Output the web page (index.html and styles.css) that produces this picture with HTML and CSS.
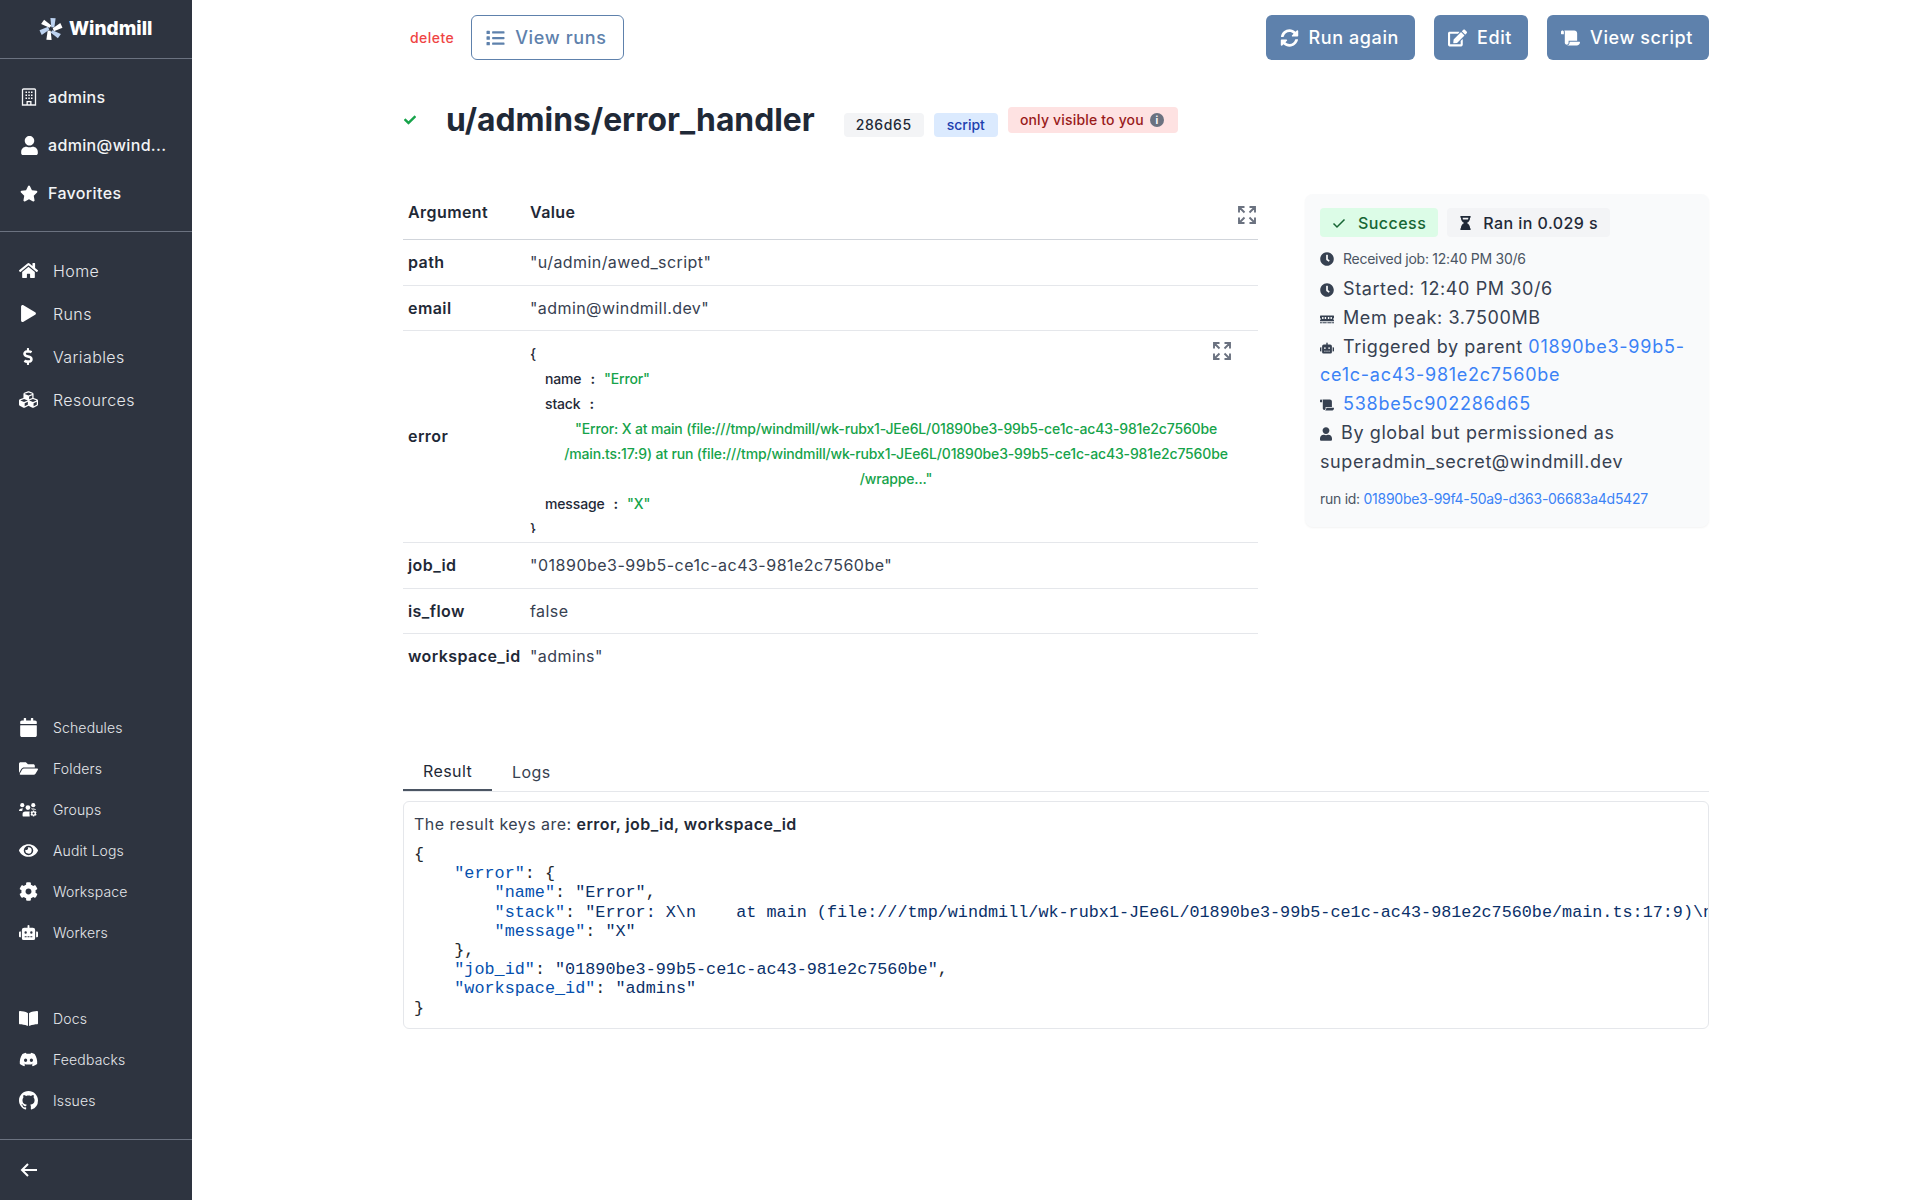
FILE: index.html
```html
<!DOCTYPE html>
<html lang="en">
<head>
<meta charset="utf-8">
<title>u/admins/error_handler | Windmill</title>
<link rel="stylesheet" href="styles.css">
</head>
<body>
<svg class="sprite" aria-hidden="true">
  <symbol id="i-user" viewBox="0 0 448 512"><path d="M224 256c70.7 0 128-57.3 128-128S294.7 0 224 0 96 57.3 96 128s57.3 128 128 128zm89.6 32h-16.7c-22.2 10.2-46.9 16-72.9 16s-50.6-5.8-72.9-16h-16.7C60.2 288 0 348.2 0 422.4V464c0 26.5 21.5 48 48 48h352c26.5 0 48-21.5 48-48v-41.6c0-74.2-60.2-134.4-134.4-134.4z"/></symbol>
  <symbol id="i-star" viewBox="0 0 576 512"><path d="M259.3 17.8L194 150.2 47.9 171.5c-26.2 3.8-36.7 36.1-17.7 54.6l105.7 103-25 145.5c-4.5 26.3 23.2 46 46.4 33.7L288 439.6l130.7 68.7c23.2 12.2 50.9-7.4 46.4-33.7l-25-145.5 105.7-103c19-18.5 8.5-50.8-17.7-54.6L382 150.2 316.7 17.8c-11.7-23.6-45.6-23.9-57.4 0z"/></symbol>
  <symbol id="i-home" viewBox="0 0 576 512"><path d="M280.37 148.26L96 300.11V464a16 16 0 0 0 16 16l112.06-.29a16 16 0 0 0 15.92-16V368a16 16 0 0 1 16-16h64a16 16 0 0 1 16 16v95.64a16 16 0 0 0 16 16.05L464 480a16 16 0 0 0 16-16V300L295.67 148.26a12.19 12.19 0 0 0-15.3 0zM571.6 251.47L488 182.56V44.05a12 12 0 0 0-12-12h-56a12 12 0 0 0-12 12v72.61L318.47 43a48 48 0 0 0-61 0L4.34 251.47a12 12 0 0 0-1.6 16.9l25.5 31A12 12 0 0 0 45.15 301l235.22-193.74a12.19 12.19 0 0 1 15.3 0L530.9 301a12 12 0 0 0 16.9-1.6l25.5-31a12 12 0 0 0-1.7-16.93z"/></symbol>
  <symbol id="i-play" viewBox="0 0 448 512"><path d="M424.4 214.7L72.4 6.6C43.8-10.3 0 6.1 0 47.9V464c0 37.5 40.7 60.1 72.4 41.3l352-208c31.4-18.5 31.5-64.1 0-82.6z"/></symbol>
  <symbol id="i-dollar" viewBox="0 0 320 512"><path d="M209.2 233.4l-108-31.6C88.7 198.2 80 186.5 80 173.5c0-16.3 13.2-29.5 29.5-29.5h66.3c12.2 0 24.2 3.7 34.2 10.5 6.1 4.1 14.3 3.1 19.5-2l34.8-34c7.1-6.9 6.1-18.4-1.8-24.5C238 74.8 207.4 64.1 176 64V16c0-8.8-7.2-16-16-16h-32c-8.8 0-16 7.2-16 16v48h-2.5C45.8 64-5.4 118.7.5 183.6c4.2 46.1 39.4 83.6 83.8 96.6l102.5 30c12.5 3.7 21.2 15.3 21.2 28.3 0 16.3-13.2 29.5-29.5 29.5h-66.3C100 368 88 364.3 78 357.5c-6.1-4.1-14.3-3.1-19.5 2l-34.8 34c-7.1 6.9-6.1 18.4 1.8 24.5 24.5 19.2 55.1 29.9 86.5 30v48c0 8.8 7.2 16 16 16h32c8.8 0 16-7.2 16-16v-48.2c46.6-.9 90.3-28.6 105.7-72.7 21.5-61.6-14.6-124.8-72.5-141.7z"/></symbol>
  <symbol id="i-cubes" viewBox="0 0 512 512"><path d="M488.6 250.2L392 214V105.5c0-15-9.3-28.4-23.4-33.7l-100-37.5c-8.1-3.1-17.1-3.1-25.3 0l-100 37.5c-14.1 5.3-23.4 18.7-23.4 33.7V214l-96.6 36.2C9.3 255.5 0 268.9 0 283.9V394c0 13.6 7.7 26.1 19.9 32.2l100 50c10.1 5.1 22.1 5.1 32.2 0l103.9-52 103.9 52c10.1 5.1 22.1 5.1 32.2 0l100-50c12.2-6.1 19.9-18.6 19.9-32.2V283.9c0-15-9.3-28.4-23.4-33.7zM358 214.8l-85 31.9v-68.2l85-37v73.3zM154 104.1l102-38.2 102 38.2v.6l-102 41.4-102-41.4v-.6zm84 291.1l-85 42.5v-79.1l85-38.8v75.4zm0-112l-102 41.4-102-41.4v-.6l102-38.2 102 38.2v.6zm240 112l-85 42.5v-79.1l85-38.8v75.4zm0-112l-102 41.4-102-41.4v-.6l102-38.2 102 38.2v.6z"/></symbol>
  <symbol id="i-calendar" viewBox="0 0 448 512"><path d="M12 192h424c6.6 0 12 5.4 12 12v260c0 26.5-21.5 48-48 48H48c-26.5 0-48-21.5-48-48V204c0-6.6 5.4-12 12-12zm436-44v-36c0-26.5-21.5-48-48-48h-48V12c0-6.6-5.4-12-12-12h-40c-6.6 0-12 5.4-12 12v52H160V12c0-6.6-5.4-12-12-12h-40c-6.6 0-12 5.4-12 12v52H48C21.5 64 0 85.5 0 112v36c0 6.6 5.4 12 12 12h424c6.6 0 12-5.4 12-12z"/></symbol>
  <symbol id="i-folder" viewBox="0 0 576 512"><path d="M572.694 292.093L500.27 416.248A63.997 63.997 0 0 1 444.989 448H45.025c-18.523 0-30.064-20.093-20.731-36.093l72.424-124.155A64 64 0 0 1 152 256h399.964c18.523 0 30.064 20.093 20.73 36.093zM152 224h328v-48c0-26.51-21.49-48-48-48H272l-64-64H48C21.49 64 0 85.49 0 112v278.046l69.077-118.418C86.214 242.25 117.989 224 152 224z"/></symbol>
  <symbol id="i-eye" viewBox="0 0 576 512"><path d="M572.52 241.4C518.29 135.59 410.93 64 288 64S57.68 135.64 3.48 241.41a32.35 32.35 0 0 0 0 29.19C57.71 376.41 165.07 448 288 448s230.32-71.64 284.52-177.41a32.35 32.35 0 0 0 0-29.19zM288 400a144 144 0 1 1 144-144 143.93 143.93 0 0 1-144 144zm0-240a95.31 95.31 0 0 0-25.31 3.79 47.85 47.85 0 0 1-66.9 66.9A95.78 95.78 0 1 0 288 160z"/></symbol>
  <symbol id="i-cog" viewBox="0 0 512 512"><path d="M487.4 315.7l-42.6-24.6c4.3-23.2 4.3-47 0-70.2l42.6-24.6c4.9-2.8 7.1-8.6 5.5-14-11.1-35.6-30-67.8-54.7-94.6-3.8-4.1-10-5.1-14.8-2.3L380.8 110c-17.9-15.4-38.5-27.3-60.8-35.1V25.8c0-5.6-3.9-10.5-9.4-11.7-36.7-8.2-74.3-7.8-109.2 0-5.5 1.2-9.4 6.1-9.4 11.7V75c-22.2 7.9-42.8 19.8-60.8 35.1L88.7 85.5c-4.9-2.8-11-1.9-14.8 2.3-24.7 26.7-43.6 58.9-54.7 94.6-1.7 5.4.6 11.2 5.5 14L67.3 221c-4.3 23.2-4.3 47 0 70.2l-42.6 24.6c-4.9 2.8-7.1 8.6-5.5 14 11.1 35.6 30 67.8 54.7 94.6 3.8 4.1 10 5.1 14.8 2.3l42.6-24.6c17.9 15.4 38.5 27.3 60.8 35.1v49.2c0 5.6 3.9 10.5 9.4 11.7 36.7 8.2 74.3 7.8 109.2 0 5.5-1.2 9.4-6.1 9.4-11.7v-49.2c22.2-7.9 42.8-19.8 60.8-35.1l42.6 24.6c4.9 2.8 11 1.9 14.8-2.3 24.7-26.7 43.6-58.9 54.7-94.6 1.5-5.5-.7-11.3-5.6-14.1zM256 336c-44.1 0-80-35.9-80-80s35.9-80 80-80 80 35.9 80 80-35.9 80-80 80z"/></symbol>
  <symbol id="i-robot" viewBox="0 0 640 512"><path d="M32,224H64V416H32A31.96166,31.96166,0,0,1,0,384V256A31.96166,31.96166,0,0,1,32,224Zm512-48V448a64.06328,64.06328,0,0,1-64,64H160a64.06328,64.06328,0,0,1-64-64V176a79.974,79.974,0,0,1,80-80H288V32a32,32,0,0,1,64,0V96H464A79.974,79.974,0,0,1,544,176ZM264,256a40,40,0,1,0-40,40A39.997,39.997,0,0,0,264,256Zm-8,128H192v32h64Zm96,0H288v32h64ZM456,256a40,40,0,1,0-40,40A39.997,39.997,0,0,0,456,256Zm-8,128H384v32h64ZM640,256V384a31.96166,31.96166,0,0,1-32,32H576V224h32A31.96166,31.96166,0,0,1,640,256Z"/></symbol>
  <symbol id="i-book" viewBox="0 0 576 512"><path d="M542.22 32.05c-54.8 3.11-163.72 14.43-230.96 55.59-4.64 2.84-7.27 7.89-7.27 13.17v363.87c0 11.55 12.63 18.85 23.28 13.49 69.18-34.82 169.23-44.32 218.7-46.92 16.89-.89 30.02-14.43 30.02-30.66V62.75c.01-17.71-15.35-31.74-33.77-30.7zM264.73 87.64C197.5 46.48 88.58 35.17 33.78 32.05 15.36 31.01 0 45.04 0 62.75V400.6c0 16.24 13.13 29.78 30.02 30.66 49.49 2.6 149.59 12.11 218.77 46.95 10.62 5.35 23.21-1.94 23.21-13.46V100.63c0-5.29-2.62-10.14-7.27-12.99z"/></symbol>
  <symbol id="i-discord" viewBox="0 0 640 512"><path d="M524.531,69.836a1.5,1.5,0,0,0-.764-.7A485.065,485.065,0,0,0,404.081,32.03a1.816,1.816,0,0,0-1.923.91,337.461,337.461,0,0,0-14.9,30.6,447.848,447.848,0,0,0-134.426,0,309.541,309.541,0,0,0-15.135-30.6,1.89,1.89,0,0,0-1.924-.91A483.689,483.689,0,0,0,116.085,69.137a1.712,1.712,0,0,0-.788.676C39.068,183.651,18.186,294.69,28.43,404.354a2.016,2.016,0,0,0,.765,1.375A487.666,487.666,0,0,0,176.02,479.918a1.9,1.9,0,0,0,2.063-.676A348.2,348.2,0,0,0,208.12,430.4a1.86,1.86,0,0,0-1.019-2.588,321.173,321.173,0,0,1-45.868-21.853,1.885,1.885,0,0,1-.185-3.126c3.082-2.309,6.166-4.711,9.109-7.137a1.819,1.819,0,0,1,1.9-.256c96.229,43.917,200.41,43.917,295.5,0a1.812,1.812,0,0,1,1.924.233c2.944,2.426,6.027,4.851,9.132,7.16a1.884,1.884,0,0,1-.162,3.126,301.407,301.407,0,0,1-45.89,21.83,1.875,1.875,0,0,0-1,2.611,391.055,391.055,0,0,0,30.014,48.815,1.864,1.864,0,0,0,2.063.7A486.048,486.048,0,0,0,610.7,405.729a1.882,1.882,0,0,0,.765-1.352C623.729,277.594,590.933,167.465,524.531,69.836ZM222.491,337.58c-28.972,0-52.844-26.587-52.844-59.239S193.056,219.1,222.491,219.1c29.665,0,53.306,26.82,52.843,59.239C275.334,310.993,251.924,337.58,222.491,337.58Zm195.38,0c-28.971,0-52.843-26.587-52.843-59.239S388.437,219.1,417.871,219.1c29.667,0,53.307,26.82,52.844,59.239C470.715,310.993,447.538,337.58,417.871,337.58Z"/></symbol>
  <symbol id="i-github" viewBox="0 0 16 16"><path d="M8 0C3.58 0 0 3.58 0 8c0 3.54 2.29 6.53 5.47 7.59.4.07.55-.17.55-.38 0-.19-.01-.82-.01-1.49-2.01.37-2.53-.49-2.69-.94-.09-.23-.48-.94-.82-1.13-.28-.15-.68-.52-.01-.53.63-.01 1.08.58 1.23.82.72 1.21 1.87.87 2.33.66.07-.52.28-.87.51-1.07-1.78-.2-3.64-.89-3.64-3.95 0-.87.31-1.59.82-2.15-.08-.2-.36-1.02.08-2.12 0 0 .67-.21 2.2.82.64-.18 1.32-.27 2-.27.68 0 1.36.09 2 .27 1.53-1.04 2.2-.82 2.2-.82.44 1.1.16 1.92.08 2.12.51.56.82 1.27.82 2.15 0 3.07-1.87 3.75-3.65 3.95.29.25.54.73.54 1.48 0 1.07-.01 1.93-.01 2.2 0 .21.15.46.55.38A8.013 8.013 0 0016 8c0-4.42-3.58-8-8-8z"/></symbol>
  <symbol id="i-clock" viewBox="0 0 512 512"><path d="M256,8C119,8,8,119,8,256S119,504,256,504,504,393,504,256,393,8,256,8Zm92.49,313h0l-20,25a16,16,0,0,1-22.49,2.5h0l-67-49.72a40,40,0,0,1-15-31.23V112a16,16,0,0,1,16-16h32a16,16,0,0,1,16,16V256l58,42.5A16,16,0,0,1,348.49,321Z"/></symbol>
  <symbol id="i-scroll" viewBox="0 0 640 512"><path d="M48 0C21.53 0 0 21.53 0 48v64c0 8.84 7.16 16 16 16h80V48C96 21.53 74.47 0 48 0zm208 412.57V352h288V96c0-52.94-43.06-96-96-96H111.59C121.74 13.41 128 29.92 128 48v368c0 38.87 34.65 69.65 74.75 63.12C234.22 474 256 444.46 256 412.57zM288 384v32c0 52.93-43.06 96-96 96h336c61.86 0 112-50.14 112-112 0-8.84-7.16-16-16-16H288z"/></symbol>
  <symbol id="i-list" viewBox="0 0 512 512"><path d="M80 368H16a16 16 0 0 0-16 16v64a16 16 0 0 0 16 16h64a16 16 0 0 0 16-16v-64a16 16 0 0 0-16-16zm0-320H16A16 16 0 0 0 0 64v64a16 16 0 0 0 16 16h64a16 16 0 0 0 16-16V64a16 16 0 0 0-16-16zm0 160H16a16 16 0 0 0-16 16v64a16 16 0 0 0 16 16h64a16 16 0 0 0 16-16v-64a16 16 0 0 0-16-16zm416 176H176a16 16 0 0 0-16 16v32a16 16 0 0 0 16 16h320a16 16 0 0 0 16-16v-32a16 16 0 0 0-16-16zm0-320H176a16 16 0 0 0-16 16v32a16 16 0 0 0 16 16h320a16 16 0 0 0 16-16V80a16 16 0 0 0-16-16zm0 160H176a16 16 0 0 0-16 16v32a16 16 0 0 0 16 16h320a16 16 0 0 0 16-16v-32a16 16 0 0 0-16-16z"/></symbol>
  <symbol id="i-sync" viewBox="0 0 512 512"><path d="M370.72 133.28C339.458 104.008 298.888 87.962 255.848 88c-77.458.068-144.328 53.178-162.791 126.85-1.344 5.363-6.122 9.15-11.651 9.15H24.103c-7.498 0-13.194-6.807-11.807-14.176C33.933 94.924 134.813 8 256 8c66.448 0 126.791 26.136 171.315 68.685L463.03 40.97C478.149 25.851 504 36.559 504 57.941V192c0 13.255-10.745 24-24 24H345.941c-21.382 0-32.09-25.851-16.971-40.971l41.75-41.749zM32 296h134.059c21.382 0 32.09 25.851 16.971 40.971l-41.75 41.75c31.262 29.273 71.835 45.319 114.876 45.28 77.418-.07 144.315-53.144 162.787-126.849 1.344-5.363 6.122-9.15 11.651-9.15h57.304c7.498 0 13.194 6.807 11.807 14.176C478.067 417.076 377.187 504 256 504c-66.448 0-126.791-26.136-171.315-68.685L48.97 471.03C33.851 486.149 8 475.441 8 454.059V320c0-13.255 10.745-24 24-24z"/></symbol>
  <symbol id="i-edit" viewBox="0 0 576 512"><path d="M402.6 83.2l90.2 90.2c3.8 3.8 3.8 10 0 13.8L274.4 405.6l-92.8 10.3c-12.4 1.4-22.9-9.1-21.5-21.5l10.3-92.8L388.8 83.2c3.8-3.8 10-3.8 13.8 0zm162-22.9l-48.8-48.8c-15.2-15.2-39.9-15.2-55.2 0l-35.4 35.4c-3.8 3.8-3.8 10 0 13.8l90.2 90.2c3.8 3.8 10 3.8 13.8 0l35.4-35.4c15.2-15.3 15.2-40 0-55.2zM384 346.2V448H64V128h229.8c3.2 0 6.2-1.3 8.5-3.5l40-40c7.6-7.6 2.2-20.5-8.5-20.5H48C21.5 64 0 85.5 0 112v352c0 26.5 21.5 48 48 48h352c26.5 0 48-21.5 48-48V306.2c0-10.7-12.9-16-20.5-8.5l-40 40c-2.2 2.3-3.5 5.3-3.5 8.5z"/></symbol>
  <symbol id="i-check" viewBox="0 0 512 512"><path d="M173.898 439.404l-166.4-166.4c-9.997-9.997-9.997-26.206 0-36.204l36.203-36.204c9.997-9.998 26.207-9.998 36.204 0L192 312.69 432.095 72.596c9.997-9.997 26.207-9.997 36.204 0l36.203 36.204c9.997 9.997 9.997 26.206 0 36.204l-294.4 294.401c-9.998 9.997-26.207 9.997-36.204-.001z"/></symbol>
  <symbol id="i-tick" viewBox="0 0 14 14"><path d="M1.500 7.500 5 11l7.500-7.500" fill="none" stroke="currentColor" stroke-width="1.500"/></symbol>
  <symbol id="i-hourglass" viewBox="0 0 384 512"><path fill-rule="evenodd" d="M360 0H24C10.700 0 0 10.700 0 24v16c0 13.300 10.700 24 24 24 0 91 51 167.700 120.800 192C75 280.300 24 357 24 448c-13.300 0-24 10.700-24 24v16c0 13.300 10.700 24 24 24h336c13.300 0 24-10.700 24-24v-16c0-13.300-10.700-24-24-24 0-91-51-167.700-120.800-192C309 231.700 360 155 360 64c13.300 0 24-10.700 24-24V24c0-13.300-10.700-24-24-24zM296 64c0 22-4 42-11 60H99c-7-18-11-38-11-60z"/></symbol>
  <symbol id="i-expand" viewBox="0 0 20 20"><path d="M2 7.500V2h5.500M2 2l5.500 5.500M12.500 2H18v5.500M18 2l-5.500 5.500M2 12.500V18h5.500M2 18l5.500-5.500M12.500 18H18v-5.500M18 18l-5.500-5.500" fill="none" stroke="currentColor" stroke-width="1.900"/></symbol>
  <symbol id="i-memory" viewBox="0 0 640 512"><path fill-rule="evenodd" d="M20 96h600a20 20 0 0 1 20 20v84c-20 4-32 24-32 56s12 52 32 56v52H0v-52c20-4 32-24 32-56s-12-52-32-56v-84a20 20 0 0 1 20-20zM96 160v96h64v-96zM216 160v96h64v-96zM360 160v96h64v-96zM480 160v96h64v-96z"/><path d="M0 400h88v48H0zM112 400h192v48H112zM336 400h192v48H336zM552 400h88v48h-88z"/></symbol>
  <symbol id="i-building" viewBox="0 0 16 18"><path fill="none" stroke="currentColor" stroke-width="1.300" d="M2.500 1h11a1 1 0 0 1 1 1v15h-13V2a1 1 0 0 1 1-1z"/><path d="M4.500 3.500h1.500V5H4.500zM7.300 3.500h1.500V5H7.300zM10 3.500h1.500V5H10zM4.500 6.500h1.500V8H4.500zM7.300 6.500h1.500V8H7.300zM10 6.500h1.500V8H10zM4.500 9.500h1.500V11H4.500zM7.300 9.500h1.500V11H7.300zM10 9.500h1.500V11H10zM5.500 13h5v4h-1.300v-2.700H6.800V17H5.500z"/></symbol>
  <symbol id="i-blade" viewBox="0 0 24 24"><path d="M11.500 10.200 6.800 2.200 11.700.4 14.400 9.300z"/></symbol>
  <symbol id="i-users-cog" viewBox="0 0 640 512">
    <circle cx="110" cy="110" r="70"/><circle cx="480" cy="110" r="70"/><circle cx="300" cy="190" r="80"/>
    <path d="M0 310a90 90 0 0 1 90-90h50a100 100 0 0 0-30 90H10z"/>
    <path d="M400 220h90a90 90 0 0 1 90 80h-100z"/>
    <path d="M120 470v-60a90 90 0 0 1 90-90h150v170H140a20 20 0 0 1-20-20z"/>
    <circle cx="490" cy="390" r="130" fill="#2e3440"/>
    <use href="#i-cog" x="380" y="280" width="220" height="220"/>
  </symbol>
</svg>

<div class="app">
  <aside class="sidebar">
    <div class="brand">
      <svg class="logo" viewBox="0 0 24 24" aria-hidden="true">
        <use href="#i-blade" class="blade-w" transform="rotate(-35 12 12)"/>
        <use href="#i-blade" class="blade-b" transform="rotate(25 12 12)"/>
        <use href="#i-blade" class="blade-w" transform="rotate(85 12 12)"/>
        <use href="#i-blade" class="blade-b" transform="rotate(145 12 12)"/>
        <use href="#i-blade" class="blade-w" transform="rotate(205 12 12)"/>
        <use href="#i-blade" class="blade-b" transform="rotate(265 12 12)"/>
      </svg>
      <span>Windmill</span>
    </div>
    <div class="user-menu">
      <a class="user-item"><span class="ubox"><svg class="uic-b"><use href="#i-building"/></svg></span>admins</a>
      <a class="user-item"><span class="ubox"><svg class="uic-t"><use href="#i-user"/></svg></span>admin@wind...</a>
      <a class="user-item"><span class="ubox"><svg class="uic"><use href="#i-star"/></svg></span>Favorites</a>
    </div>
    <nav class="nav-main">
      <a class="nav-item"><svg class="nic"><use href="#i-home"/></svg>Home</a>
      <a class="nav-item"><svg class="nic"><use href="#i-play"/></svg>Runs</a>
      <a class="nav-item"><svg class="nic"><use href="#i-dollar"/></svg>Variables</a>
      <a class="nav-item"><svg class="nic nic-t"><use href="#i-cubes"/></svg>Resources</a>
    </nav>
    <nav class="nav-sec">
      <a class="sec-item"><svg class="nic nic-t"><use href="#i-calendar"/></svg>Schedules</a>
      <a class="sec-item"><svg class="nic"><use href="#i-folder"/></svg>Folders</a>
      <a class="sec-item"><svg class="nic"><use href="#i-users-cog"/></svg>Groups</a>
      <a class="sec-item"><svg class="nic"><use href="#i-eye"/></svg>Audit Logs</a>
      <a class="sec-item"><svg class="nic nic-t"><use href="#i-cog"/></svg>Workspace</a>
      <a class="sec-item"><svg class="nic"><use href="#i-robot"/></svg>Workers</a>
    </nav>
    <nav class="nav-help">
      <a class="sec-item"><svg class="nic"><use href="#i-book"/></svg>Docs</a>
      <a class="sec-item"><svg class="nic"><use href="#i-discord"/></svg>Feedbacks</a>
      <a class="sec-item"><svg class="nic nic-t"><use href="#i-github"/></svg>Issues</a>
    </nav>
    <div class="collapse">
      <svg class="arrow" viewBox="0 0 18 16" aria-hidden="true"><path d="M8 2 2 8l6 6M2 8h15"/></svg>
    </div>
  </aside>

  <main class="main">
    <div class="container">
      <header class="actions">
        <div class="actions-left">
          <a class="delete">delete</a>
          <a class="btn btn-outline"><svg class="bic"><use href="#i-list"/></svg>View runs</a>
        </div>
        <div class="actions-right">
          <a class="btn btn-solid"><svg class="bic"><use href="#i-sync"/></svg>Run again</a>
          <a class="btn btn-solid"><svg class="bic"><use href="#i-edit"/></svg>Edit</a>
          <a class="btn btn-solid"><svg class="bic"><use href="#i-scroll"/></svg>View script</a>
        </div>
      </header>

      <div class="title-row">
        <svg class="status-check"><use href="#i-check"/></svg>
        <h1 class="title">u/admins/error_handler</h1>
        <span class="badge badge-gray">286d65</span>
        <span class="badge badge-blue">script</span>
        <span class="badge badge-red">only visible to you
          <span class="info">i</span>
        </span>
      </div>

      <div class="details">
        <div class="args">
          <svg class="expand expand-top"><use href="#i-expand"/></svg>
          <table class="args-table">
            <thead>
              <tr class="row-head"><th class="col-k">Argument</th><th>Value</th></tr>
            </thead>
            <tbody>
              <tr class="row"><td class="key">path</td><td>"u/admin/awed_script"</td></tr>
              <tr class="row row-s"><td class="key">email</td><td>"admin@windmill.dev"</td></tr>
              <tr class="row-tall"><td class="key">error</td>
                <td>
                  <div class="tree">
                    <svg class="expand expand-inner"><use href="#i-expand"/></svg>
                    <div class="tl">{</div>
                    <div class="tl ti"><b>name</b><i class="colon">:</i><span class="str">"Error"</span></div>
                    <div class="tl ti"><b>stack</b><i class="colon">:</i></div>
                    <div class="tstr">"Error: X at main (file:///tmp/windmill/wk-rubx1-JEe6L/01890be3-99b5-ce1c-ac43-981e2c7560be<br>/main.ts:17:9) at run (file:///tmp/windmill/wk-rubx1-JEe6L/01890be3-99b5-ce1c-ac43-981e2c7560be<br>/wrappe..."</div>
                    <div class="tl ti"><b>message</b><i class="colon">:</i><span class="str">"X"</span></div>
                    <div class="tl">}</div>
                  </div>
                </td></tr>
              <tr class="row"><td class="key">job_id</td><td class="val-id">"01890be3-99b5-ce1c-ac43-981e2c7560be"</td></tr>
              <tr class="row row-s"><td class="key">is_flow</td><td>false</td></tr>
              <tr class="row row-s row-last"><td class="key">workspace_id</td><td>"admins"</td></tr>
            </tbody>
          </table>
        </div>

        <aside class="panel">
          <div class="pills">
            <span class="pill pill-ok"><svg class="pic"><use href="#i-tick"/></svg>Success</span>
            <span class="pill pill-time"><svg class="pic-h"><use href="#i-hourglass"/></svg>Ran in 0.029 s</span>
          </div>
          <div class="received"><svg class="mic"><use href="#i-clock"/></svg>Received job: 12:40 PM 30/6</div>
          <div class="meta">
            <div><svg class="mic"><use href="#i-clock"/></svg>Started: 12:40 PM 30/6</div>
            <div><svg class="mic"><use href="#i-memory"/></svg>Mem peak: 3.7500MB</div>
            <div><svg class="mic"><use href="#i-robot"/></svg>Triggered by parent <a class="link">01890be3-99b5-ce1c-ac43-981e2c7560be</a></div>
            <div><svg class="mic"><use href="#i-scroll"/></svg><a class="link">538be5c902286d65</a></div>
            <div><svg class="mic mic-u"><use href="#i-user"/></svg>By global but permissioned as superadmin_secret@windmill.dev</div>
          </div>
          <div class="runid">run id: <a class="link-s">01890be3-99f4-50a9-d363-06683a4d5427</a></div>
        </aside>
      </div>

      <div class="tabs">
        <a class="tab tab-on">Result</a>
        <a class="tab">Logs</a>
      </div>

      <section class="result">
        <p class="result-keys">The result keys are: <strong>error, job_id, workspace_id</strong></p>
<pre class="json">{
    <span class="k">"error"</span>: {
        <span class="k">"name"</span>: <span class="s">"Error"</span>,
        <span class="k">"stack"</span>: <span class="s">"Error: X\n    at main (file:///tmp/windmill/wk-rubx1-JEe6L/01890be3-99b5-ce1c-ac43-981e2c7560be/main.ts:17:9)\n    at run (file:///tmp/windmill/wk-rubx1-JEe6L/01890be3-99b5-ce1c-ac43-981e2c7560be/wrapper.ts:4:18)"</span>,
        <span class="k">"message"</span>: <span class="s">"X"</span>
    },
    <span class="k">"job_id"</span>: <span class="s">"01890be3-99b5-ce1c-ac43-981e2c7560be"</span>,
    <span class="k">"workspace_id"</span>: <span class="s">"admins"</span>
}</pre>
      </section>
    </div>
  </main>
</div>
</body>
</html>
```

FILE: styles.css
```css
* { box-sizing: border-box; }
html, body { margin: 0; padding: 0; height: 100%; }
body { font-family: Inter, "Liberation Sans", sans-serif; color: #1f2937; background: #fff; font-size: 16px; overflow: hidden; }
.sprite { display: none; }
.app { display: flex; height: 1200px; }

/* sidebar */
.sidebar { width: 192px; flex: none; background: #2e3440; color: #fff; display: flex; flex-direction: column; }
.brand { height: 59px; flex: none; border-bottom: 1px solid #6b7280; display: flex; align-items: center; padding-left: 39px; gap: 6px; font-size: 19px; font-weight: 800; padding-bottom: 1px; }
.logo { width: 24px; height: 24px; }
.blade-w { fill: #fff; }
.blade-b { fill: #bcd2f0; }
.user-menu { flex: none; padding: 14px 0; border-bottom: 1px solid #6b7280; height: 173px; }
.user-item { display: flex; align-items: center; height: 48px; font-size: 16px; font-weight: 500; color: #f3f4f6; letter-spacing: .35px; }
.ubox { width: 48px; flex: none; display: flex; justify-content: center; padding-left: 10px; }
.uic { width: 18px; height: 17px; }
.uic-t { width: 17px; height: 19px; }
.uic-b { width: 16px; height: 18px; }
.nav-main { flex: 1; padding-top: 17px; }
.nav-item { display: flex; align-items: center; height: 43px; padding-left: 19px; font-size: 16px; font-weight: 300; color: #e5e7eb; letter-spacing: .4px; }
.nav-sec { flex: none; }
.nav-help { flex: none; margin-top: 45px; margin-bottom: 18px; }
.sec-item { display: flex; align-items: center; height: 41px; padding-left: 19px; font-size: 14px; font-weight: 300; color: #e5e7eb; letter-spacing: .15px; }
.nic { width: 19px; height: 17px; margin-right: 15px; flex: none; fill: #fff; }
.nic-t { height: 19px; }
.collapse { height: 61px; flex: none; border-top: 1px solid #6b7280; display: flex; align-items: center; padding-left: 20px; }
.arrow { width: 18px; height: 16px; fill: none; stroke: #fff; stroke-width: 2; }
.sidebar svg { fill: #fff; }
.sidebar .arrow { fill: none; }

/* main */
.main { flex: 1; min-width: 0; padding-top: 15px; }
.container { width: 1306px; margin: 0 auto; }
.actions { display: flex; justify-content: space-between; align-items: center; height: 45px; }
.actions-left { display: flex; align-items: center; gap: 17px; padding-left: 7px; }
.actions-right { display: flex; gap: 19px; }
.delete { color: #ef4444; font-size: 14px; font-weight: 500; letter-spacing: .45px; }
.btn { display: flex; align-items: center; height: 45px; border-radius: 6px; font-size: 18px; font-weight: 500; padding: 0 16px 0 14px; gap: 10px; letter-spacing: .6px; }
.btn-solid { background: #5e81ac; color: #fff; fill: #fff; }
.btn-outline { border: 1px solid #5e81ac; color: #5e81ac; fill: #5e81ac; letter-spacing: .65px; }
.bic { width: 19px; height: 18px; fill: currentColor; flex: none; }

.title-row { display: flex; align-items: center; height: 45px; margin-top: 37px; }
.status-check { width: 12px; height: 12px; fill: #16a34a; margin-left: 1px; }
.title { margin: 0 29px 0 30px; font-size: 31.8px; font-weight: 700; color: #1f2937; line-height: 36px; white-space: nowrap; }
.badge { display: inline-flex; align-items: center; font-size: 14px; font-weight: 500; border-radius: 4px; padding: 0 12px; height: 24px; margin-top: 10px; margin-right: 10px; }
.badge-gray { background: #f3f4f6; color: #1f2937; letter-spacing: .6px; }
.badge-blue { background: #dbeafe; color: #1e40af; padding: 0 13px; margin-right: 10px; }
.badge-red { background: #fee2e2; color: #991b1b; height: 26px; margin-top: 0; margin-right: 0; gap: 6px; padding: 0 14px 0 12px; letter-spacing: .18px; }
.info { width: 14px; height: 14px; border-radius: 50%; background: #6b7280; color: #fff; font-size: 10px; font-weight: 700; display: inline-flex; align-items: center; justify-content: center; letter-spacing: 0; }

.details { display: flex; justify-content: space-between; align-items: flex-start; margin-top: 51px; }
.args { width: 855px; position: relative; }
.args-table { width: 855px; table-layout: fixed; border-collapse: collapse; font-size: 16px; letter-spacing: .42px; }
.col-k { width: 122px; }
.args-table th { text-align: left; font-weight: 600; color: #1f2937; padding: 0 5px 7px; }
.args-table td { padding: 0 5px; color: #374151; }
.args-table td.val-id { letter-spacing: .5px; }
.args-table td.key { font-weight: 600; color: #1f2937; white-space: nowrap; }
.row-head { height: 46px; border-bottom: 1px solid #d1d5db; }
.row { height: 46px; border-bottom: 1px solid #e5e7eb; }
.row-s { height: 45px; }
.row-last { border-bottom: 0; }
.row-tall { height: 212px; border-bottom: 1px solid #e5e7eb; }
.expand { width: 20px; height: 20px; color: #6b7280; position: absolute; }
.expand-top { top: 12px; right: 1px; }
.expand-inner { top: 1px; right: 21px; }

.tree { position: relative; height: 193px; overflow: hidden; font-size: 14px; padding-top: 1.500px; letter-spacing: -.15px; }
.tl { height: 25px; line-height: 25px; font-weight: 500; color: #1f2937; }
.ti { padding-left: 15px; font-weight: 500; color: #1f2937; }
.ti b { font-weight: 500; }
.colon { font-style: normal; font-weight: 700; margin: 0 9px; }
.str { color: #16a34a; }
.tstr { color: #16a34a; font-weight: 500; text-align: center; line-height: 25px; width: 680px; margin-left: 26px; }

.panel { width: 404px; background: #f9fafb; border-radius: 8px; box-shadow: 0 1px 2px rgba(0,0,0,.05); padding: 14px 15px 18px; margin-top: 1px; }
.pills { display: flex; gap: 9px; }
.pill { display: flex; align-items: center; height: 29px; border-radius: 4px; font-size: 16px; font-weight: 500; padding: 0 12px; letter-spacing: .45px; }
.pill-ok { background: #dcfce7; color: #166534; }
.pill-time { background: #f3f4f6; color: #1f2937; }
.pic { width: 14px; height: 14px; margin-right: 12px; }
.pic-h { width: 11px; height: 14px; margin-right: 12px; fill: currentColor; margin-left: 1px; }
.received { font-size: 14px; line-height: 20px; margin-top: 12px; color: #4b5563; display: flex; align-items: center; letter-spacing: -.27px; }
.received .mic { margin-right: 9px; }
.mic { width: 14px; height: 14px; fill: #374151; margin-right: 9px; flex: none; vertical-align: -2px; }
.mic-u { width: 12px; margin-right: 9px; }
.meta { font-size: 18px; line-height: 28.8px; color: #374151; margin-top: 6px; letter-spacing: .6px; }
.link { color: #3b82f6; letter-spacing: .75px; }
.link-s { color: #3b82f6; }
.runid { font-size: 14px; line-height: 20px; margin-top: 12px; color: #4b5563; letter-spacing: -.27px; }

.tabs { display: flex; height: 42px; border-bottom: 1px solid #e5e7eb; margin-top: 72px; }
.tab { height: 41px; padding: 3px 20px 0; display: flex; align-items: center; font-size: 16px; color: #374151; letter-spacing: .4px; }
.tab-on { border-bottom: 2px solid #4b5563; color: #1f2937; }
.result { margin-top: 9px; border: 1px solid #e5e7eb; border-radius: 6px; padding: 10px 0 9px 10px; height: 228px; overflow: hidden; }
.result-keys { margin: 0; font-size: 16px; line-height: 24px; color: #374151; letter-spacing: .45px; }
.result-keys strong { font-weight: 600; color: #1f2937; }
.json { margin: 9px 0 0; font-family: "Liberation Mono", monospace; font-size: 16.8px; line-height: 19.2px; color: #24292f; white-space: pre; overflow: hidden; }
.k { color: #0550ae; }
.s { color: #0a3069; }
```
